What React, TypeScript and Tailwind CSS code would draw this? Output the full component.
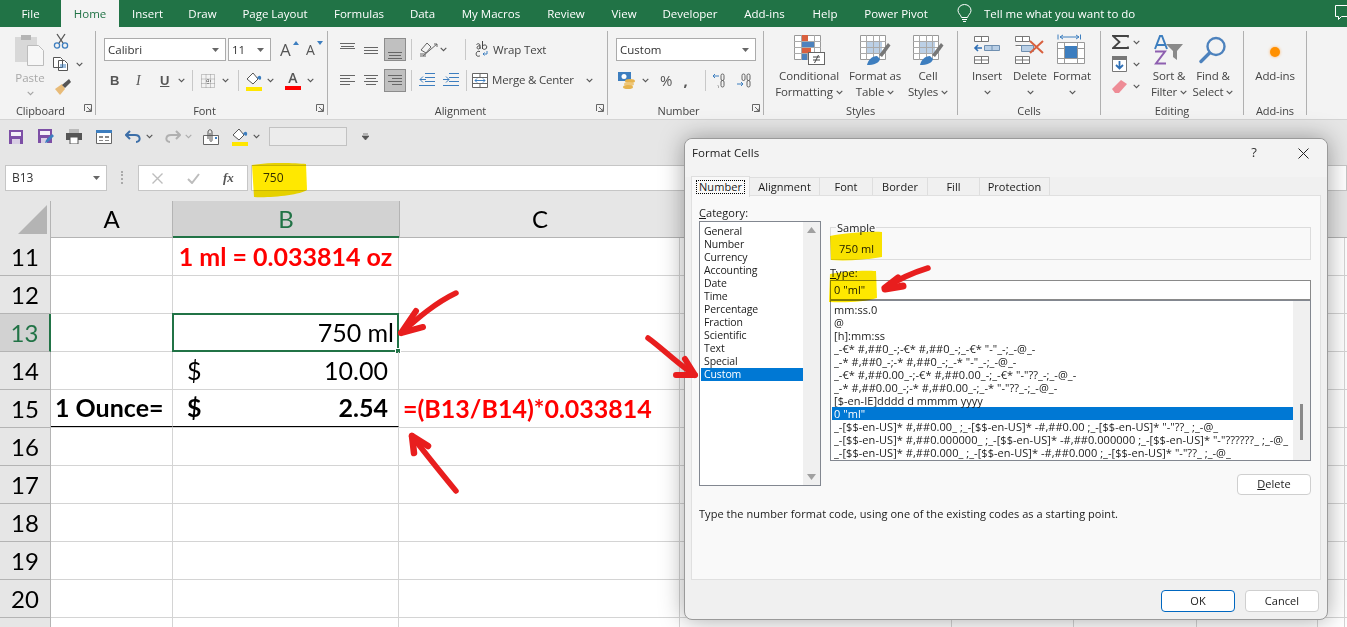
import React from "react";

const ui = "font-['Open_Sans','Noto_Sans',sans-serif]";
const Chev = ({ c = "" }: { c?: string }) => (
  <svg width="7" height="5" viewBox="0 0 7 5" className={"shrink-0 " + c}>
    <path d="M.7 .8 3.5 3.6 6.3 .8" fill="none" stroke="#555" strokeWidth="1.1" />
  </svg>
);
const Tri = ({ c = "" }: { c?: string }) => (
  <svg width="7" height="4" viewBox="0 0 7 4" className={"shrink-0 " + c}>
    <path d="M0 0h7L3.5 4z" fill="#666" />
  </svg>
);
const Launcher = () => (
  <svg width="8" height="8" viewBox="0 0 8 8" className="absolute right-[3px] top-[-2px]">
    <path d="M.5 7V.5H7.5V7.5H2M3 3l4 4M7 4.5V7H4.5" fill="none" stroke="#666" strokeWidth="1" />
  </svg>
);
const Lines = ({ rows, w = 16, h = 22 }: { rows: number[][]; w?: number; h?: number }) => (
  <svg width={w} height={h} viewBox={`0 0 ${w} ${h}`} className="shrink-0">
    {rows.map((r, i) => (
      <path key={i} d={`M${r[0]} ${r[2]}.5H${r[1]}`} stroke="#666" strokeWidth="1" />
    ))}
  </svg>
);
const Sep = ({ c = "" }: { c?: string }) => <div className={"w-px h-[21px] bg-[#c8c8c8] shrink-0 " + c} />;

const Group = ({ w, label, launcher, children }: { w: string; label: string; launcher?: boolean; children: React.ReactNode }) => (
  <div className={"shrink-0 h-[84px] flex flex-col border-r border-[#b0b0b0] " + w}>
    <div className="h-[75px]">{children}</div>
    <div className={"relative h-[9px] leading-[9px] text-center text-[11px] tracking-[-0.1px] text-[#444] " + (launcher ? "pr-[14px]" : "")}>
      {label}
      {launcher && <Launcher />}
    </div>
  </div>
);

const Big = ({ w, ml, l1, l2, chevInline, icon }: { w: string; ml: string; l1: string; l2?: string; chevInline?: boolean; icon: React.ReactNode }) => (
  <div className={"flex flex-col items-center shrink-0 text-[11.5px] tracking-[-0.15px] leading-[16px] text-[#444] " + w + " " + ml}>
    <div className="h-[37px] flex items-center justify-center">{icon}</div>
    <div className="whitespace-nowrap mt-[0px]">{l1}</div>
    {l2 ? (
      <div className="whitespace-nowrap flex items-center gap-[3px]">
        {l2}
        {chevInline && <Chev />}
      </div>
    ) : (
      <div className="h-4 flex items-center">
        <Chev />
      </div>
    )}
  </div>
);

const CellGridIcon = ({ children }: { children?: React.ReactNode }) => (
  <svg width="32" height="32" viewBox="0 0 32 32">{children}</svg>
);

const CondIcon = () => (
  <CellGridIcon>
    <path d="M1.500 1.500h26v24h-26z" fill="#fff" stroke="#999" />
    <path d="M1 7.500h27M1 13.500h27M1 19.500h27M8.500 1v25M14.500 1v25M21.500 1v25" stroke="#aaa" />
    <rect x="9" y="1" width="6" height="6" fill="#d9603e" />
    <rect x="9" y="8" width="12" height="5" fill="#4d82bd" />
    <rect x="9" y="14" width="9" height="5" fill="#d9603e" />
    <rect x="9" y="20" width="5" height="6" fill="#4d82bd" />
    <rect x="15.500" y="18.500" width="16" height="12" fill="#fff" stroke="#666" />
    <path d="M20 23h7M20 26h7M25.500 21l-4 8" stroke="#444" fill="none" />
  </CellGridIcon>
);
const TableIcon = () => (
  <CellGridIcon>
    <path d="M1.500 1.500h25v24h-25z" fill="#fff" stroke="#999" />
    <rect x="7" y="7" width="16" height="13" fill="#bcd0e6" />
    <path d="M1 7.500h26M1 13.500h26M1 19.500h26M7.500 1v25M14.500 1v25M20.500 1v25" stroke="#aaa" />
    <path d="M20 21 29 9l2.500 2.500L23 23z" fill="#777" />
    <path d="M8 31c1-5 5-9 10-9l3 3c-1 4-6 6-13 6z" fill="#3d7ebf" />
  </CellGridIcon>
);
const InsertIcon = () => (
  <svg width="28" height="28" viewBox="0 0 28 28">
    <path d="M1.500 .5h14v5h-14zM8.500 .5v5M1.500 20.500h14v7h-14zM1.500 24h14M8.500 20.500v7" fill="#fff" stroke="#777" />
    <path d="M11.500 9.500h15v5h-15z" fill="#b9cfe6" stroke="#6f8fb0" />
    <path d="M19 9.500v5" stroke="#6f8fb0" />
    <path d="M9 12H2M5 9 2 12l3 3" fill="none" stroke="#2f6fb5" strokeWidth="1.600" />
  </svg>
);
const DeleteIcon = () => (
  <svg width="32" height="28" viewBox="0 0 32 28">
    <path d="M1.500 .5h14v5h-14zM8.500 .5v5M1.500 20.500h14v7h-14zM1.500 24h14M8.500 20.500v7M1.500 9.500h8v5" fill="#fff" stroke="#777" />
    <path d="M7.500 9.500h12v6h-12z" fill="#b9cfe6" stroke="#6f8fb0" />
    <path d="M16 5l13 12M29 5 16 17" stroke="#d9603e" strokeWidth="2" />
  </svg>
);
const FormatIcon = () => (
  <svg width="30" height="32" viewBox="0 0 30 32">
    <path d="M1 .5v5M23.500 .5v5M3 3h19M6 1 3 3l3 2M19 1l3 2-3 2" fill="none" stroke="#3d7ebf" />
    <path d="M.5 8.500h27v21h-27zM7.500 8.500v21M20.500 8.500v21M.5 14.500h27M.5 24.500h27" fill="#fff" stroke="#999" />
    <rect x="8" y="12" width="12" height="12" fill="#3d7ebf" />
  </svg>
);

const TABS: [string, string][] = [
  ["File", "w-[61px]"], ["Home", "w-[58px]"], ["Insert", "w-[57px]"], ["Draw", "w-[53px]"], ["Page Layout", "w-[92px]"],
  ["Formulas", "w-[76px]"], ["Data", "w-[51px]"], ["My Macros", "w-[86px]"], ["Review", "w-[64px]"], ["View", "w-[52px]"],
  ["Developer", "w-[80px]"], ["Add-ins", "w-[69px]"], ["Help", "w-[52px]"], ["Power Pivot", "w-[90px]"],
];

const Select = ({ w, label, ml = "", triC = "" }: { w: string; label: string; ml?: string; triC?: string }) => (
  <div className={"h-[23px] bg-white border border-[#ababab] flex items-center justify-between pl-[3px] pr-[6px] text-[11.5px] text-[#333] shrink-0 " + w + " " + ml}>
    <span>{label}</span>
    <Tri c={triC} />
  </div>
);

const Ribbon = () => (
  <div className="h-[93px] bg-[#f3f3f3] border-b border-[#d4d4d4] pt-[4px] flex shrink-0">
    <Group w="w-[96px]" label="Clipboard" launcher>
      <div className="flex">
        <div className="ml-[14px] w-[32px] flex flex-col items-center text-[11.5px] text-[#a8a8a8]">
          <svg width="32" height="34" viewBox="0 0 32 34" className="mt-[2px]">
            <path d="M1 4h22v25H1z" fill="#d8d8d8" />
            <path d="M7 2h10v5H7z" fill="#b5b5b5" />
            <path d="M13.500 12.500h11l5 5v15h-16z" fill="#f7f7f7" stroke="#bcbcbc" />
          </svg>
          <div className="mt-[3px] leading-[16px]">Paste</div>
          <Chev c="mt-[5px] opacity-50" />
        </div>
        <div className="ml-[7px] flex flex-col pt-[1px]">
          <svg width="16" height="16" viewBox="0 0 16 16" className="mt-[1px]">
            <path d="M4 1l6 9M12 1 6 10" stroke="#555" strokeWidth="1.300" />
            <circle cx="4" cy="12.500" r="2.600" fill="none" stroke="#3d7ebf" strokeWidth="1.300" />
            <circle cx="12" cy="12.500" r="2.600" fill="none" stroke="#3d7ebf" strokeWidth="1.300" />
          </svg>
          <div className="flex items-center mt-[8px]">
            <svg width="16" height="14" viewBox="0 0 16 14">
              <path d="M.5 .5h7l2 2v8h-9z M5.500 3.500h6l3 3v7h-9z" fill="#fff" stroke="#555" />
              <path d="M7 8h6M7 10h6" stroke="#3d7ebf" />
            </svg>
            <Chev c="ml-[7px]" />
          </div>
          <svg width="18" height="16" viewBox="0 0 18 16" className="mt-[8px]">
            <path d="M9 5 2 10l5 6 5-6z" fill="#e8bb78" />
            <path d="M9 6l7-6 2 3-6 6z" fill="#555" />
          </svg>
        </div>
      </div>
    </Group>

    <Group w="w-[232px]" label="Font" launcher>
      <div className="flex ml-[8px] mt-[7px] items-center">
        <Select w="w-[122px]" label="Calibri" />
        <Select w="w-[43px]" label="11" ml="ml-[2px]" />
        <div className="ml-[9px] relative w-[16px] text-[17px] leading-[20px] text-[#555]">
          A
          <svg width="6" height="4" viewBox="0 0 6 4" className="absolute right-[-3px] top-[1px]"><path d="M3 0l3 4H0z" fill="#3d7ebf" /></svg>
        </div>
        <div className="ml-[10px] relative w-[14px] text-[14px] leading-[20px] text-[#555]">
          A
          <svg width="6" height="4" viewBox="0 0 6 4" className="absolute right-[-3px] top-[1px]"><path d="M3 4l3-4H0z" fill="#3d7ebf" /></svg>
        </div>
      </div>
      <div className="flex ml-[14px] mt-[9px] h-[21px] items-center text-[#555]">
        <span className="w-[8px] font-['Liberation_Sans'] font-bold text-[13px]">B</span>
        <span className="ml-[18px] w-[8px] font-['Liberation_Serif'] italic text-[14px]">I</span>
        <span className="ml-[16px] w-[9px] font-['Liberation_Sans'] font-bold underline text-[13px]">U</span>
        <Chev c="ml-[9px]" />
        <Sep c="ml-[7px]" />
        <svg width="14" height="14" viewBox="0 0 14 14" className="ml-[8px]">
          <path d="M.5.500h13v13H.5zM.5 5h13M.5 9.500h13M5 .5v13M9.500.5v13" fill="none" stroke="#999" strokeDasharray="1 1" />
          <path d="M7 5v5M5 7h5" stroke="#555" strokeDasharray="1 1" />
        </svg>
        <Chev c="ml-[7px]" />
        <Sep c="ml-[9px]" />
        <svg width="16" height="20" viewBox="0 0 16 20" className="ml-[7px]">
          <path d="M1 8l6-6 5 6-5 5z" fill="#fff" stroke="#555" />
          <path d="M11 7c2-4 5-2 4 1l-1 1z" fill="#3d7ebf" />
          <rect y="16" width="16" height="4" fill="#ffe600" />
        </svg>
        <Chev c="ml-[5px]" />
        <div className="ml-[11px] w-[16px] flex flex-col items-center">
          <span className="text-[14px] leading-[14px] font-semibold text-[#555]">A</span>
          <div className="w-[16px] h-[4px] bg-[#f00] mt-[1px]" />
        </div>
        <Chev c="ml-[6px]" />
      </div>
    </Group>

    <Group w="w-[280px]" label="Alignment" launcher>
      <div className="flex ml-[12px] mt-[7px] items-center h-[23px]">
        <Lines rows={[[0, 15, 4], [1, 14, 7], [0, 15, 9]]} />
        <div className="ml-[8px]"><Lines rows={[[0, 14, 8], [0, 14, 11], [0, 14, 14]]} w={15} /></div>
        <div className="ml-[5px] w-[22px] h-[23px] bg-[#c0c0c0] border border-[#8c8c8c] flex justify-center items-center">
          <Lines rows={[[0, 14, 13], [1, 13, 16], [0, 14, 19]]} w={14} />
        </div>
        <Sep c="ml-[5px]" />
        <svg width="20" height="18" viewBox="0 0 20 18" className="ml-[7px]">
          <path d="M2 9 8 2l4 4-5 6zM4 15l14-12M15 3h3v3" fill="none" stroke="#666" />
          <path d="M1 12h6v4H1z" fill="#666" opacity=".5" />
        </svg>
        <Chev c="ml-[1px]" />
        <Sep c="ml-[18px]" />
        <svg width="14" height="17" viewBox="0 0 14 17" className="ml-[9px] shrink-0">
          <path d="M1.500 3.500c3-2 4 0 3.500 4.500M5 5c-3-1-4 3-1.500 3C4.500 8 5 7 5 6M7.500 0v8M7.500 5c2-2 5-1 4 2-1 2-3 1.500-4 .5M5 10.500c-3-1-4.500 1.500-3.500 4 1 1 3 1 3.500 0" fill="none" stroke="#444" strokeWidth="1" />
          <path d="M12 10v3H8M9.500 11.500 8 13l1.500 1.500" fill="none" stroke="#3d7ebf" strokeWidth="1" />
        </svg>
        <span className="ml-[4px] text-[11.5px] tracking-[-0.15px] text-[#444] whitespace-nowrap">Wrap Text</span>
      </div>
      <div className="flex ml-[12px] mt-[8px] items-center h-[22px]">
        <Lines rows={[[0, 15, 6], [0, 10, 9], [0, 15, 12], [0, 10, 15]]} />
        <div className="ml-[8px]"><Lines rows={[[0, 14, 6], [2, 12, 9], [0, 14, 12], [2, 12, 15]]} w={15} /></div>
        <div className="ml-[5px] w-[22px] h-[23px] bg-[#c0c0c0] border border-[#8c8c8c] flex justify-center items-center">
          <Lines rows={[[0, 14, 6], [4, 14, 9], [0, 14, 12], [4, 14, 15]]} w={14} />
        </div>
        <Sep c="ml-[5px]" />
        <svg width="16" height="14" viewBox="0 0 16 14" className="ml-[7px]">
          <path d="M6 .5h10M6 4.500h10M6 8.500h10M0 12.500h16M7 6.500H1M4 3.500l-3 3 3 3" fill="none" stroke="#3d7ebf" />
        </svg>
        <svg width="16" height="14" viewBox="0 0 16 14" className="ml-[8px]">
          <path d="M6 .5h10M6 4.500h10M6 8.500h10M0 12.500h16M0 6.500h6M3 3.500l3 3-3 3" fill="none" stroke="#3d7ebf" />
        </svg>
        <Sep c="ml-[7px]" />
        <svg width="16" height="15" viewBox="0 0 16 15" className="ml-[5px]">
          <path d="M.5.500h15v14H.5zM.5 4.500h15M.5 10.500h15M8 .5v4M8 10.500v4" fill="#fff" stroke="#666" />
          <path d="M3 7.500h10M5 5.500l-2 2 2 2M11 5.500l2 2-2 2" fill="none" stroke="#3d7ebf" />
        </svg>
        <span className="ml-[4px] text-[11.5px] tracking-[-0.2px] text-[#444] whitespace-nowrap">Merge &amp; Center</span>
        <Chev c="ml-[12px]" />
      </div>
    </Group>

    <Group w="w-[156px]" label="Number" launcher>
      <div className="ml-[8px] mt-[7px]"><Select w="w-[140px]" label="Custom" /></div>
      <div className="flex ml-[10px] mt-[8px] h-[22px] items-center text-[#555]">
        <svg width="18" height="18" viewBox="0 0 18 18">
          <path d="M0 1h13v9H0z" fill="#3d7ebf" />
          <circle cx="6" cy="5.500" r="2.500" fill="#fff" />
          <ellipse cx="12" cy="10" rx="5" ry="2" fill="#e6b34d" />
          <ellipse cx="11" cy="13" rx="5" ry="2" fill="#eec77a" />
          <ellipse cx="10" cy="16" rx="5" ry="2" fill="#e6b34d" />
        </svg>
        <Chev c="ml-[6px]" />
        <span className="ml-[11px] text-[15px]">%</span>
        <span className="ml-[11px] text-[15px] font-bold leading-[15px]">,</span>
        <Sep c="ml-[17px]" />
        <svg width="16" height="16" viewBox="0 0 16 16" className="ml-[6px] overflow-visible">
          <path d="M7 4H1M3 2 1 4l2 2" fill="none" stroke="#3d7ebf" />
          <path d="M6 13.500v-.5M9 7V3.500a1.500 1.500 0 0 1 3 0V7a1.500 1.500 0 0 1-3 0zM6 15h1M9 13.500V10a1.500 1.500 0 0 1 3 0v3.500a1.500 1.500 0 0 1-3 0z" fill="none" stroke="#555" strokeWidth=".9" />
        </svg>
        <svg width="16" height="16" viewBox="0 0 16 16" className="ml-[9px] overflow-visible">
          <path d="M0 12h6M4 10l2 2-2 2" fill="none" stroke="#3d7ebf" />
          <path d="M5 7V3.500a1.500 1.500 0 0 1 3 0V7a1.500 1.500 0 0 1-3 0zM10 7V3.500a1.500 1.500 0 0 1 3 0V7a1.500 1.500 0 0 1-3 0zM10 13.500V10a1.500 1.500 0 0 1 3 0v3.500a1.500 1.500 0 0 1-3 0z" fill="none" stroke="#555" strokeWidth=".9" />
        </svg>
      </div>
    </Group>

    <Group w="w-[194px]" label="Styles">
      <div className="flex">
        <Big w="w-[70px]" ml="ml-[10px]" l1="Conditional" l2="Formatting" chevInline icon={<CondIcon />} />
        <Big w="w-[54px]" ml="ml-[4px]" l1="Format as" l2="Table" chevInline icon={<TableIcon />} />
        <Big w="w-[46px]" ml="ml-[3px]" l1="Cell" l2="Styles" chevInline icon={<TableIcon />} />
      </div>
    </Group>

    <Group w="w-[143px]" label="Cells">
      <div className="flex">
        <Big w="w-[40px]" ml="ml-[9px]" l1="Insert" icon={<InsertIcon />} />
        <Big w="w-[42px]" ml="ml-[2px]" l1="Delete" icon={<DeleteIcon />} />
        <Big w="w-[42px]" ml="ml-[0px]" l1="Format" icon={<FormatIcon />} />
      </div>
    </Group>

    <Group w="w-[143px]" label="Editing">
      <div className="flex">
        <div className="ml-[11px] w-[34px] flex flex-col">
          <div className="flex items-center mt-[4px] h-[14px]">
            <svg width="17" height="14" viewBox="0 0 17 14"><path d="M16 2.500V1H1l6.500 6L1 13h15v-1.500" fill="none" stroke="#444" strokeWidth="1.800" /></svg>
            <Chev c="ml-[4px]" />
          </div>
          <div className="flex items-center mt-[7px] h-[16px]">
            <svg width="15" height="16" viewBox="0 0 15 16"><path d="M.5.500h14v15H.5z" fill="#fff" stroke="#777" /><path d="M0 0h15v4H0z" fill="#777" /><path d="M7.500 5v7M4 9l3.500 3.500L11 9" fill="none" stroke="#2f6fb5" strokeWidth="1.800" /></svg>
            <Chev c="ml-[6px]" />
          </div>
          <div className="flex items-center mt-[8px] h-[13px]">
            <svg width="15" height="13" viewBox="0 0 15 13"><path d="M0 9l9-9 6 4-8 9H3z" fill="#ee8c96" /></svg>
            <Chev c="ml-[6px]" />
          </div>
        </div>
        <Big w="w-[40px]" ml="ml-[3px]" l1="Sort &" l2="Filter" chevInline icon={
          <svg width="32" height="32" viewBox="0 0 32 32" className="overflow-visible">
            <path d="M2 15 7 2h2l5 13M4 11h8" fill="none" stroke="#3d7ebf" strokeWidth="2" />
            <path d="M2 17.500h10L3 29.500h10" fill="none" stroke="#8e5fb0" strokeWidth="2" />
            <path d="M13 10h17l-6 7v9l-4-3v-6z" fill="#8a8a8a" />
          </svg>
        } />
        <Big w="w-[44px]" ml="ml-[2px]" l1="Find &" l2="Select" chevInline icon={
          <svg width="28" height="28" viewBox="0 0 28 28">
            <circle cx="17" cy="10.500" r="8.500" fill="none" stroke="#4d82bd" strokeWidth="2.400" />
            <path d="M10.500 17 2 25.500" stroke="#4d82bd" strokeWidth="3.400" strokeLinecap="round" />
          </svg>
        } />
      </div>
    </Group>

    <Group w="w-[63px]" label="Add-ins">
      <Big w="w-[62px]" ml="" l1="Add-ins" l2=" " icon={
        <div className="w-[10px] h-[10px] rounded-full bg-[#ff9000] mt-[4px] shadow-[0_0_3px_#ffb060]" />
      } />
    </Group>
  </div>
);

const Qat = () => (
  <div className="h-[45px] bg-[#e6e6e6] flex items-start pt-[7px] shrink-0">
    <div className="flex items-center h-[19px] pl-[9px]">
      <svg width="14" height="14" viewBox="0 0 14 14"><path d="M0 0h14v14H0z" fill="#7d4fa6" /><path d="M2 2h10v4H2z" fill="#f4f0f8" /><path d="M3 9h8v5H3z" fill="#d9cfe4" /></svg>
      <svg width="16" height="15" viewBox="0 0 16 15" className="ml-[15px]"><path d="M0 0h14v14H0z" fill="#7d4fa6" /><path d="M2 2h10v4H2z" fill="#f4f0f8" /><path d="M3 9h6v5H3z" fill="#d9cfe4" /><path d="M7 14l1-3 6-6 2 2-6 6z" fill="#3d7ebf" /></svg>
      <svg width="16" height="15" viewBox="0 0 16 15" className="ml-[12px]"><path d="M3 0h10v5H3z" fill="#bbb" /><path d="M0 4h16v7H0z" fill="#555" /><path d="M4 8h8v7H4z" fill="#fff" stroke="#555" /></svg>
      <svg width="16" height="14" viewBox="0 0 16 14" className="ml-[14px]"><path d="M.5.500h15v13H.5z" fill="#fff" stroke="#666" /><path d="M0 0h16v3H0z" fill="#3d7ebf" /><path d="M3 6h4v2H3zM9 6h4v2H9zM3 10h4v1H3zM9 10h4v1H9z" fill="#888" /></svg>
      <svg width="16" height="13" viewBox="0 0 16 13" className="ml-[13px]"><path d="M5 1 1 5l4 4M1.500 5H10c6 0 6 7 1 7" fill="none" stroke="#3d6fa8" strokeWidth="2" /></svg>
      <Chev c="ml-[5px]" />
      <svg width="16" height="13" viewBox="0 0 16 13" className="ml-[12px]"><path d="M11 1l4 4-4 4M14.500 5H6c-6 0-6 7-1 7" fill="none" stroke="#b0b0b0" strokeWidth="2" /></svg>
      <Chev c="ml-[4px] opacity-40" />
      <svg width="16" height="16" viewBox="0 0 16 16" className="ml-[11px]"><path d="M.5 6.500h15v9H.5z" fill="#fff" stroke="#666" /><path d="M5 10V3c0-3 4-3 4 0v8c0 2-2 2-2 0V4" fill="none" stroke="#555" /><path d="M12 8h2v2h-2z" fill="#3d7ebf" /></svg>
      <svg width="16" height="18" viewBox="0 0 16 18" className="ml-[13px]"><path d="M1 7l6-6 5 6-5 5z" fill="#fff" stroke="#555" /><path d="M11 6c2-4 5-2 4 1l-1 1z" fill="#3d7ebf" /><rect y="14" width="16" height="4" fill="#ffe600" /></svg>
      <Chev c="ml-[5px]" />
      <div className="ml-[9px] w-[78px] h-[19px] bg-[#ececec] border border-[#c2c2c2]" />
      <svg width="7" height="7" viewBox="0 0 7 7" className="ml-[15px]"><path d="M1 1h5M0 3h7L3.500 7z" fill="#555" stroke="#555" strokeWidth=".7" /></svg>
    </div>
  </div>
);

const FormulaBar = () => (
  <div className="h-[36px] bg-[#e6e6e6] flex items-start shrink-0">
    <div className="ml-[5px] w-[102px] h-[26px] bg-white border border-[#c6c6c6] flex items-center justify-between pl-[6px] pr-[6px] text-[12px] text-[#333]">
      <span>B13</span>
      <Tri />
    </div>
    <div className="ml-[14px] mt-[6px] w-[3px] h-[13px] border-l-[2px] border-dotted border-[#aaa]" />
    <div className="ml-[14px] w-[110px] h-[26px] bg-white border border-[#c6c6c6] flex items-center">
      <svg width="11" height="11" viewBox="0 0 11 11" className="ml-[13px]"><path d="M.5.500l10 10M10.500.500l-10 10" stroke="#bdbdbd" strokeWidth="1.400" /></svg>
      <svg width="13" height="11" viewBox="0 0 13 11" className="ml-[24px]"><path d="M1 6l4 4 7-9" fill="none" stroke="#bdbdbd" strokeWidth="2" /></svg>
      <span className="ml-[23px] font-['Liberation_Serif'] italic font-bold text-[13px] text-[#555]">fx</span>
    </div>
    <div className="ml-[3px] flex-1 h-[26px] bg-white border border-[#c6c6c6] flex items-center pl-[11px] text-[12px] text-[#333]">750</div>
  </div>
);

const ROWS = [11, 12, 13, 14, 15, 16, 17, 18, 19, 20, 21];
const xl = "font-['Lato',sans-serif] text-[24px] text-black";
const gc = "h-full border-r border-[#d4d4d4] shrink-0 ";

const Sheet = () => (
  <div className={"flex-1 bg-white " + xl}>
    <div className="h-[37px] flex bg-[#e6e6e6]">
      <div className="w-[51px] shrink-0 border-r border-[#b4b4b4] relative">
        <svg width="30" height="30" viewBox="0 0 30 30" className="ml-[18px] mt-[4px]"><path d="M29 0v29H0z" fill="#b4b4b4" /></svg>
      </div>
      <div className="w-[122px] shrink-0 border-r border-b border-[#b4b4b4] flex items-center justify-center">A</div>
      <div className="w-[226px] shrink-0 bg-[#d2d2d2] border-b-2 border-[#217346] text-[#217346] flex items-center justify-center">B</div>
      <div className="w-[281px] shrink-0 border-l border-b border-[#b4b4b4] flex items-center justify-center">C</div>
      <div className="flex-1 border-b border-[#b4b4b4]" />
    </div>
    {ROWS.map((r) => {
      const sel = r === 13;
      const bold15 = r === 15;
      return (
        <div key={r} className="h-[38px] flex border-b border-[#d4d4d4]">
          <div className={"w-[51px] shrink-0 flex items-center justify-center border-b -mb-px border-[#b4b4b4] " + (sel ? "bg-[#d2d2d2] text-[#217346] border-r-2 border-r-[#217346]" : "bg-[#e6e6e6] border-r border-r-[#b4b4b4]")}>{r < 21 ? r : ""}</div>
          <div className={gc + "w-[122px] flex items-center pl-[4px] text-[25px] whitespace-nowrap " + (bold15 ? "font-bold border-b border-b-black -mb-px" : "")}>{bold15 ? "1 Ounce=" : ""}</div>
          <div className={gc + "w-[226px] relative flex items-center text-[25px] " + (bold15 ? "font-bold border-b border-b-black -mb-px" : "")}>
            {r === 11 && <span className="w-full text-center font-bold text-[#f00] whitespace-nowrap">1 ml = 0.033814 oz</span>}
            {sel && (
              <>
                <span className="w-full text-right pr-[4px]">750 ml</span>
                <div className="absolute -left-px -top-px -right-px -bottom-px border-2 border-[#217346]" />
                <div className="absolute -right-[3px] -bottom-[3px] w-[6px] h-[6px] bg-[#217346] border border-white" />
              </>
            )}
            {r === 14 && (<><span className="ml-[14px]">$</span><span className="ml-auto pr-[10px]">10.00</span></>)}
            {bold15 && (<><span className="ml-[14px]">$</span><span className="ml-auto pr-[10px]">2.54</span></>)}
          </div>
          <div className={gc + "w-[281px] flex items-center pl-[4px] text-[25px] whitespace-nowrap"}>
            {bold15 && <span className="font-bold text-[#f00]">=(B13/B14)*0.033814</span>}
          </div>
          <div className={gc + "w-[272px]"} />
          <div className={gc + "w-[122px]"} />
          <div className={gc + "w-[123px]"} />
          <div className={gc + "w-[121px]"} />
          <div className={gc + "w-[27px]"} />
        </div>
      );
    })}
  </div>
);

const DTabs: [string, string, string][] = [
  ["Number", "w-[59px]", ""], ["Alignment", "w-[70px]", ""], ["Font", "w-[53px]", ""], ["Border", "w-[55px]", ""], ["Fill", "w-[52px]", ""], ["Protection", "w-[70px]", ""],
];
const CATS = ["General", "Number", "Currency", "Accounting", "Date", "Time", "Percentage", "Fraction", "Scientific", "Text", "Special", "Custom"];
const CODES = [
  "mm:ss.0", "@", "[h]:mm:ss",
  '_-€* #,##0_-;-€* #,##0_-;_-€* "-"_-;_-@_-',
  '_-* #,##0_-;-* #,##0_-;_-* "-"_-;_-@_-',
  '_-€* #,##0.00_-;-€* #,##0.00_-;_-€* "-"??_-;_-@_-',
  '_-* #,##0.00_-;-* #,##0.00_-;_-* "-"??_-;_-@_-',
  "[$-en-IE]dddd d mmmm yyyy", '0 "ml"',
  '_-[$$-en-US]* #,##0.00_ ;_-[$$-en-US]* -#,##0.00 ;_-[$$-en-US]* "-"??_ ;_-@_',
  '_-[$$-en-US]* #,##0.000000_ ;_-[$$-en-US]* -#,##0.000000 ;_-[$$-en-US]* "-"??????_ ;_-@_',
  '_-[$$-en-US]* #,##0.000_ ;_-[$$-en-US]* -#,##0.000 ;_-[$$-en-US]* "-"??_ ;_-@_',
];
const ScrollArrow = ({ down }: { down?: boolean }) => (
  <svg width="9" height="6" viewBox="0 0 9 6"><path d={down ? "M0 0h9L4.500 6z" : "M4.500 0 9 6H0z"} fill="#a0a0a0" /></svg>
);

const Dialog = () => (
  <div className={"absolute left-[684px] top-[138px] w-[644px] h-[482px] rounded-[8px] bg-[#f0f0f0] border border-[#9a9a9a] shadow-[0_0_24px_rgba(0,0,0,0.35)] flex flex-col text-[11px] tracking-[0.05px] text-[#1a1a1a] " + ui}>
    <div className="h-[38px] pl-[7px] pb-[10px] flex items-center text-[#222] text-[11.5px] shrink-0 rounded-t-[8px] bg-[#f3f3f3]">
      <span>Format Cells</span>
      <span className="ml-auto text-[13px] text-[#333]">?</span>
      <svg width="11" height="11" viewBox="0 0 11 11" className="ml-[41px] mr-[18px]"><path d="M.5.500l10 10M10.500.500l-10 10" stroke="#222" /></svg>
    </div>
    <div className="flex pl-[6px] h-[19px] shrink-0 -mb-px">
      {DTabs.map(([t, w], i) => (
        <div key={t} className={"flex items-center justify-center border border-[#dedede] border-b-0 " + w + (i === 0 ? " bg-[#f9f9f9] -mt-[1px] h-[21px] relative z-10" : " bg-[#f0f0f0] h-[19px] border-l-0")}>
          <span className={i === 0 ? "border border-dotted border-black px-[2px] leading-[12px] -mt-px" : ""}>{t}</span>
        </div>
      ))}
    </div>
    <div className="mx-[6px] h-[385px] bg-[#f9f9f9] border border-[#e0e0e0] flex flex-col shrink-0">
      <div className="flex flex-1">
        <div className="ml-[7px] w-[122px] shrink-0">
          <div className="h-[25px] pt-[10px] leading-[13px]"><span className="underline">C</span>ategory:</div>
          <div className="h-[265px] bg-white border border-[#828790] flex text-[10.5px] tracking-[-0.1px]">
            <div className="w-[103px] pl-px pt-[3px] shrink-0">
              {CATS.map((c) => (
                <div key={c} className={"h-[13px] leading-[13px] pl-[3px] " + (c === "Custom" ? "bg-[#0078d4] text-white" : "")}>{c}</div>
              ))}
            </div>
            <div className="flex-1 bg-[#f0f0f0] flex flex-col items-center justify-between py-[5px]">
              <ScrollArrow />
              <ScrollArrow down />
            </div>
          </div>
        </div>
        <div className="ml-[9px] w-[481px] shrink-0 pt-[31px]">
          <div className="relative h-[33px] border border-[#dcdcdc]">
            <span className="absolute left-[5px] -top-[6px] bg-[#f9f9f9] px-px leading-[12px]">Sample</span>
            <div className="pl-[8px] pt-[14px] leading-[13px]">750 ml</div>
          </div>
          <div className="h-[20px] pt-[6px] leading-[13px]"><span className="underline">T</span>ype:</div>
          <div className="h-[20px] bg-white border border-[#8a8a8a] pl-[3px] leading-[18px]">0 "ml"</div>
          <div className="h-[161px] bg-white border border-[#828790] flex">
            <div className="w-[462px] pl-px pt-[2px] shrink-0 overflow-hidden">
              {CODES.map((c) => (
                <div key={c} className={"h-[13px] leading-[13px] pl-[2px] whitespace-nowrap " + (c === '0 "ml"' ? "bg-[#0078d4] text-white" : "")}>{c}</div>
              ))}
            </div>
            <div className="flex-1 bg-[#f0f0f0] flex justify-center pt-[103px]">
              <div className="w-[3px] h-[36px] bg-[#8a8a8a]" />
            </div>
          </div>
          <div className="flex justify-end mt-[13px]">
            <div className="w-[74px] h-[21px] bg-white border border-[#cfcfcf] rounded-[4px] flex items-center justify-center"><span><span className="underline">D</span>elete</span></div>
          </div>
        </div>
      </div>
      <div className="ml-[7px] h-[72px] leading-[13px]">Type the number format code, using one of the existing codes as a starting point.</div>
    </div>
    <div className="flex justify-end pr-[8px] mt-[10px]">
      <div className="w-[74px] h-[22px] bg-white border border-[#0067c0] rounded-[4px] flex items-center justify-center">OK</div>
      <div className="ml-[10px] w-[74px] h-[22px] bg-white border border-[#cfcfcf] rounded-[4px] flex items-center justify-center">Cancel</div>
    </div>
  </div>
);

const Marks = () => (
  <>
    <svg width="1347" height="627" viewBox="0 0 1347 627" className="absolute left-0 top-0 pointer-events-none mix-blend-multiply">
      <path d="M252 165 C270 162 295 163 306 164 L307 190 C300 195 270 198 254 197z" fill="#ffe800" />
      <path d="M830 236 C845 233 870 231 882 232 L882 257 C865 260 845 261 831 260z" fill="#ffe800" />
      <path d="M830 274 C845 271 865 270 876 271 L877 298 C865 302 845 303 829 302z" fill="#ffe800" />
    </svg>
    <svg width="1347" height="627" viewBox="0 0 1347 627" className="absolute left-0 top-0 pointer-events-none" fill="none" stroke="#e81e1e" strokeLinecap="round" strokeLinejoin="round">
      <path d="M456 293C435 303 418 318 401 333" strokeWidth="5.500" />
      <path d="M401 333 416 311M401 333 423 327" strokeWidth="6" />
      <path d="M456 491C442 474 425 453 412 436" strokeWidth="5.500" />
      <path d="M412 436 414 453M412 436 428 446" strokeWidth="6.500" />
      <path d="M648 338C662 348 680 366 695 375" strokeWidth="5.500" />
      <path d="M695 375 685 359M695 375H676" strokeWidth="6" />
      <path d="M928 268C915 272 900 278 885 288" strokeWidth="5.500" />
      <path d="M885 288 898 278M885 289 903 286" strokeWidth="7" />
    </svg>
  </>
);

export default function App() {
  return (
    <div className={"relative w-[1347px] h-[627px] overflow-hidden flex flex-col bg-white " + ui}>
      <div className="h-[27px] bg-[#217346] flex text-white text-[11.5px] shrink-0">
        {TABS.map(([t, w]) => (
          <div key={t} className={"flex items-center justify-center whitespace-nowrap " + w + (t === "Home" ? " bg-[#f3f3f3] text-[#217346]" : "")}>{t}</div>
        ))}
        <svg width="15" height="19" viewBox="0 0 15 19" className="ml-[16px] mt-[4px]">
          <path d="M4.500 13.500C4 11 1 9.500 1 6.500a6.500 6 0 0 1 13 0c0 3-3 4.500-3.500 7zM5 15.500h5M6 17.500h3" fill="none" stroke="#fff" />
        </svg>
        <span className="ml-[12px] mt-[5px] whitespace-nowrap">Tell me what you want to do</span>
        <svg width="14" height="16" viewBox="0 0 14 16" className="absolute left-[1335px] top-[5px]"><path d="M.5.500H14M.5.500v11h3v3l3-3H14" fill="none" stroke="#fff" /></svg>
      </div>
      <Ribbon />
      <Qat />
      <FormulaBar />
      <Sheet />
      <Dialog />
      <Marks />
    </div>
  );
}
